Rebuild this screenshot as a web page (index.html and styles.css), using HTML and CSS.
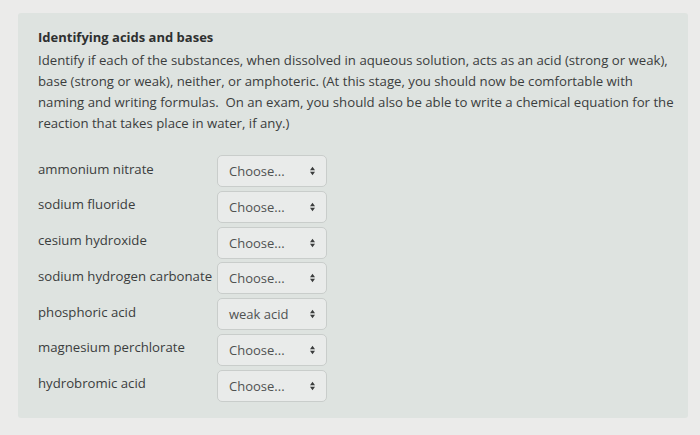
FILE: index.html
```html
<!DOCTYPE html>
<html>
<head>
<meta charset="utf-8">
<link rel="stylesheet" href="styles.css">
</head>
<body>
<div class="panel">
  <div class="title">Identifying acids and bases</div>
  <p class="intro">Identify if each of the substances, when dissolved in aqueous solution, acts as an acid (strong or weak), base (strong or weak), neither, or amphoteric. (At this stage, you should now be comfortable with naming and writing formulas.&nbsp; On an exam, you should also be able to write a chemical equation for the reaction that takes place in water, if any.)</p>
  <div class="rows">
    <div class="row"><span class="label">ammonium nitrate</span><div class="select"><span>Choose...</span><svg class="arrows" viewBox="0 0 8 12"><path d="M4 1 L7 5 H1 Z M4 11 L7 7 H1 Z"/></svg></div></div>
    <div class="row"><span class="label">sodium fluoride</span><div class="select"><span>Choose...</span><svg class="arrows" viewBox="0 0 8 12"><path d="M4 1 L7 5 H1 Z M4 11 L7 7 H1 Z"/></svg></div></div>
    <div class="row"><span class="label">cesium hydroxide</span><div class="select"><span>Choose...</span><svg class="arrows" viewBox="0 0 8 12"><path d="M4 1 L7 5 H1 Z M4 11 L7 7 H1 Z"/></svg></div></div>
    <div class="row"><span class="label">sodium hydrogen carbonate</span><div class="select"><span>Choose...</span><svg class="arrows" viewBox="0 0 8 12"><path d="M4 1 L7 5 H1 Z M4 11 L7 7 H1 Z"/></svg></div></div>
    <div class="row"><span class="label">phosphoric acid</span><div class="select"><span>weak acid</span><svg class="arrows" viewBox="0 0 8 12"><path d="M4 1 L7 5 H1 Z M4 11 L7 7 H1 Z"/></svg></div></div>
    <div class="row"><span class="label">magnesium perchlorate</span><div class="select"><span>Choose...</span><svg class="arrows" viewBox="0 0 8 12"><path d="M4 1 L7 5 H1 Z M4 11 L7 7 H1 Z"/></svg></div></div>
    <div class="row"><span class="label">hydrobromic acid</span><div class="select"><span>Choose...</span><svg class="arrows" viewBox="0 0 8 12"><path d="M4 1 L7 5 H1 Z M4 11 L7 7 H1 Z"/></svg></div></div>
  </div>
</div>
</body>
</html>
```
FILE: styles.css
```css
html, body {
  margin: 0;
  padding: 0;
}
body {
  background: #ebebea;
  font-family: "Open Sans", "Noto Sans", sans-serif;
  color: #3b3d3d;
  width: 700px;
  height: 435px;
  overflow: hidden;
}
.panel {
  margin: 13px 12px 0 18px;
  height: 405px;
  box-sizing: border-box;
  background: #dee3e0;
  border-radius: 3px;
  padding: 15px 14px 0 20px;
}
.title {
  font-weight: 700;
  font-size: 13px;
  line-height: 18px;
  color: #2e3030;
}
.intro {
  margin: 4px 0 0 0;
  font-size: 13.2px;
  line-height: 21px;
}
.rows {
  margin-top: 21px;
  display: flex;
  flex-direction: column;
  gap: 3.8px;
}
.row {
  display: grid;
  grid-template-columns: 179px 110px;
  align-items: center;
}
.label {
  font-size: 13.2px;
  line-height: 18px;
  margin-top: -5px;
}
.select {
  height: 32px;
  box-sizing: border-box;
  border: 1px solid #c9cdcb;
  border-radius: 5px;
  background: #e9ebea;
  display: flex;
  align-items: center;
  justify-content: space-between;
  padding: 0 10px 0 11px;
  font-size: 13px;
  color: #505252;
}
.arrows {
  width: 7px;
  height: 10px;
  fill: #3a3c3c;
}
```
